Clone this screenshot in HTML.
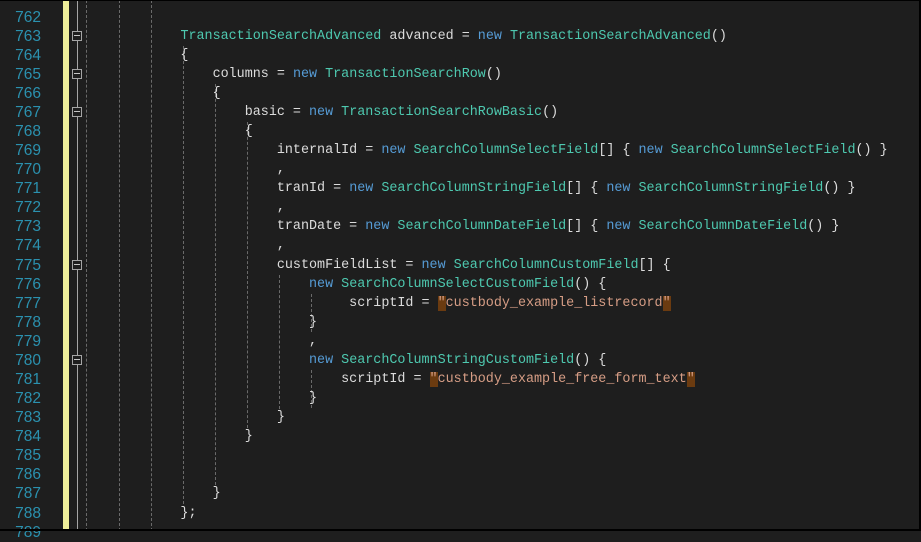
<!DOCTYPE html>
<html><head><meta charset="utf-8"><style>
html,body{margin:0;padding:0;}
body{width:921px;height:531px;background:#1e1e1e;position:relative;overflow:hidden;border:0;}
.frame{position:absolute;left:0;top:0;width:919px;height:528px;border-top:1px solid #000;border-right:2px solid #000;border-bottom:2px solid #000;box-sizing:content-box;pointer-events:none;z-index:5}
pre{margin:0;position:absolute;top:7.5px;font-family:"Liberation Mono",monospace;font-size:13.4px;line-height:19.08px;color:#dcdcdc;}
#nums{left:0;width:41px;text-align:right;color:#2b91af;font-family:"Liberation Sans",sans-serif;font-size:15.5px}
#code{left:84px}
.t{color:#4ec9b0}.k{color:#569cd6}.s{color:#d69d85}.q{background:#6b3b10;color:#d69d85}
.yb{position:absolute;left:63px;top:0;width:6px;height:531px;background:#eeee9a}
.fl{position:absolute;left:77px;top:0;width:1px;height:531px;background:#a5a5a5}
.fb{position:absolute;left:72px;width:10px;height:10px;border:1px solid #a5a5a5;background:#1e1e1e;box-sizing:border-box}
.fb:after{content:"";position:absolute;left:1px;top:3px;width:6px;height:1px;background:#c5c5c5}
.g{position:absolute;width:0;border-left:1px dashed #6a6a6a}
</style></head><body>
<div class="yb"></div><div class="fl"></div>
<div class="fb" style="top:31px"></div>
<div class="fb" style="top:69px"></div>
<div class="fb" style="top:107px"></div>
<div class="fb" style="top:260px"></div>
<div class="fb" style="top:355px"></div>
<div class="g" style="left:86px;top:0;height:531px"></div>
<div class="g" style="left:119px;top:0;height:531px"></div>
<div class="g" style="left:151px;top:0;height:531px"></div>
<div class="g" style="left:183px;top:46px;height:458px"></div>
<div class="g" style="left:215px;top:84px;height:401px"></div>
<div class="g" style="left:247px;top:122px;height:306px"></div>
<div class="g" style="left:279px;top:275px;height:134px"></div>
<div class="g" style="left:311px;top:294px;height:38px"></div>
<div class="g" style="left:311px;top:370px;height:38px"></div>
<pre id="nums">762
763
764
765
766
767
768
769
770
771
772
773
774
775
776
777
778
779
780
781
782
783
784
785
786
787
788
789</pre>
<pre id="code">

            <span class="t">TransactionSearchAdvanced</span> advanced = <span class="k">new</span> <span class="t">TransactionSearchAdvanced</span>()
            {
                columns = <span class="k">new</span> <span class="t">TransactionSearchRow</span>()
                {
                    basic = <span class="k">new</span> <span class="t">TransactionSearchRowBasic</span>()
                    {
                        internalId = <span class="k">new</span> <span class="t">SearchColumnSelectField</span>[] { <span class="k">new</span> <span class="t">SearchColumnSelectField</span>() }
                        ,
                        tranId = <span class="k">new</span> <span class="t">SearchColumnStringField</span>[] { <span class="k">new</span> <span class="t">SearchColumnStringField</span>() }
                        ,
                        tranDate = <span class="k">new</span> <span class="t">SearchColumnDateField</span>[] { <span class="k">new</span> <span class="t">SearchColumnDateField</span>() }
                        ,
                        customFieldList = <span class="k">new</span> <span class="t">SearchColumnCustomField</span>[] {
                            <span class="k">new</span> <span class="t">SearchColumnSelectCustomField</span>() {
                                 scriptId = <span class="q">"</span><span class="s">custbody_example_listrecord</span><span class="q">"</span>
                            }
                            ,
                            <span class="k">new</span> <span class="t">SearchColumnStringCustomField</span>() {
                                scriptId = <span class="q">"</span><span class="s">custbody_example_free_form_text</span><span class="q">"</span>
                            }
                        }
                    }


                }
            };
</pre>
<div class="frame"></div>
</body></html>
